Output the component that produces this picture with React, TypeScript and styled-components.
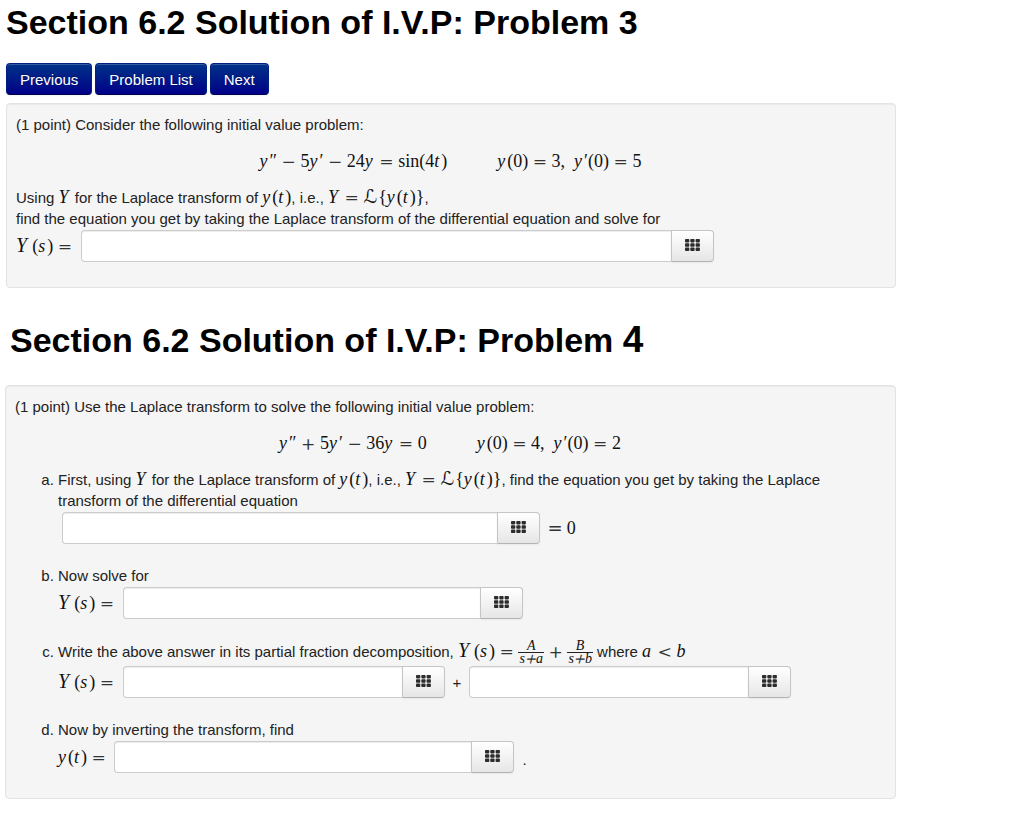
import React from "react";
import styled, { createGlobalStyle } from "styled-components";

const GlobalStyle = createGlobalStyle`
  *, *::before, *::after { box-sizing: border-box; }
  body {
    margin: 0;
    background: #fff;
    color: #222;
    font: 15px/21px "Liberation Sans", Arial, sans-serif;
  }
`;

const Page = styled.main`
  padding-bottom: 20px;
`;

const Problem = styled.section<{ $inset: number }>`
  padding: 0 128px 0 ${(p) => p.$inset}px;
`;

const Title = styled.h1<{ $spaced?: boolean }>`
  margin: 0;
  padding: ${(p) => (p.$spaced ? "32px 0 25px 5px" : "2px 0 21px")};
  color: #000;
  font-size: 34px;
  line-height: 40px;
  font-weight: bold;
  white-space: nowrap;
`;

const BigDigit = styled.span`
  font-size: 37px;
`;

const Nav = styled.nav`
  display: flex;
  gap: 3px;
  margin-bottom: 8px;
`;

const NavButton = styled.button`
  height: 32px;
  padding: 0 13px;
  border: 1px solid #002080;
  border-bottom-color: #00004d;
  border-radius: 4px;
  background: linear-gradient(#003388, #000088);
  box-shadow: inset 0 1px 0 rgba(255, 255, 255, 0.2), 0 1px 2px rgba(0, 0, 0, 0.05);
  color: #fff;
  font: inherit;
  text-shadow: 0 -1px 0 rgba(0, 0, 0, 0.25);
`;

const Well = styled.div`
  padding: 10px 10px 25px 9px;
  border: 1px solid #e3e3e3;
  border-radius: 4px;
  background: #f5f5f5;
  box-shadow: inset 0 1px 1px rgba(0, 0, 0, 0.05);
`;

const Text = styled.p<{ $tall?: boolean }>`
  margin: 0;
  line-height: ${(p) => (p.$tall ? 24 : 21)}px;
`;

const Equation = styled.div`
  display: flex;
  align-items: center;
  justify-content: center;
  gap: 50px;
  height: 20px;
  margin: 16px 0;
`;

const Math = styled.span`
  color: #111;
  font-family: "Liberation Serif", "Times New Roman", serif;
  font-size: 18px;
  line-height: 1;
  white-space: nowrap;
`;

const Var = styled.i<{ $capital?: boolean }>`
  padding-right: ${(p) => (p.$capital ? 5 : 2)}px;
  font-size: ${(p) => (p.$capital ? 20 : 18)}px;
  line-height: 0;
`;

const Symbol = styled.span`
  color: #333;
  font-family: "DejaVu Math TeX Gyre", "DejaVu Sans", sans-serif;
  line-height: 0;
`;

const Op = styled(Symbol)<{ $end?: boolean }>`
  padding: ${(p) => (p.$end ? "0 1px 0 5px" : "0 5px")};
  font-size: 17px;
`;

const Script = styled.span`
  padding-right: 1px;
  font-family: "DejaVu Sans", sans-serif;
  font-size: 19px;
  line-height: 0;
`;

const Fraction = styled.span`
  display: inline-flex;
  flex-direction: column;
  align-items: center;
  vertical-align: middle;
  font-size: 14px;
  line-height: 12px;
  font-style: italic;
`;

const Numerator = styled.span`
  width: 100%;
  border-bottom: 1px solid #222;
  text-align: center;
`;

const Denominator = styled.span`
  padding: 0 1px;
`;

const Steps = styled.ol`
  display: grid;
  gap: 21px;
  margin: 0;
  padding-left: 43px;
  list-style: lower-alpha;
`;

const AnswerRow = styled.div<{ $indent?: boolean }>`
  display: flex;
  align-items: center;
  gap: 8px;
  margin-top: 1px;
  padding-left: ${(p) => (p.$indent ? 4 : 0)}px;
`;

const Group = styled.div<{ $width: number }>`
  display: flex;
  flex: 0 1 ${(p) => p.$width}px;
  min-width: 0;
  height: 32px;
`;

const Answer = styled.input`
  flex: 1;
  min-width: 0;
  padding: 4px 6px;
  border: 1px solid #ccc;
  border-right: 0;
  border-radius: 4px 0 0 4px;
  background: #fff;
  box-shadow: inset 0 1px 1px rgba(0, 0, 0, 0.075);
  font: inherit;
`;

const PadButton = styled.button`
  display: grid;
  place-items: center;
  width: 43px;
  padding: 0 0 2px;
  border: 1px solid #c5c5c5;
  border-bottom-color: #b3b3b3;
  border-radius: 0 4px 4px 0;
  background: linear-gradient(#fff, #e6e6e6);
  box-shadow: inset 0 1px 0 rgba(255, 255, 255, 0.2), 0 1px 2px rgba(0, 0, 0, 0.05);
`;

const Note = styled.span`
  padding-top: 4px;
`;

const GridIcon = () => (
  <svg width="15" height="12" viewBox="0 0 15 12" fill="#2c2c2c" aria-hidden="true">
    {[0, 1, 2].map((r) =>
      [0, 1, 2].map((c) => (
        <rect key={`${r}${c}`} x={c * 5.3} y={r * 4.3} width="4.3" height="3.4" rx="0.8" />
      ))
    )}
  </svg>
);

const AnswerField = ({ id, width, label }: { id: string; width: number; label: string }) => (
  <Group $width={width}>
    <Answer id={id} type="text" aria-label={label} />
    <PadButton type="button" aria-label={`Equation editor for ${label}`}>
      <GridIcon />
    </PadButton>
  </Group>
);

const TransformOfY = () => (
  <Math>
    <Var>Y</Var>
    <Op>=</Op>
    <Script>ℒ</Script>
    {"{"}
    <Var>y</Var>(<Var>t</Var>){"}"}
  </Math>
);

const Call = ({ fn, arg }: { fn: string; arg: string }) => (
  <>
    <Var $capital={fn === "Y"}>{fn}</Var>(<Var>{arg}</Var>)
  </>
);

const CallLabel = ({ id, fn, arg }: { id: string; fn: string; arg: string }) => (
  <Math as="label" htmlFor={id}>
    <Call fn={fn} arg={arg} />
    <Op $end>=</Op>
  </Math>
);

const InitialValues = ({ first, second }: { first: number; second: number }) => (
  <Math>
    <Var>y</Var>(0)<Op>=</Op>
    {first},&nbsp; <Var>y</Var>′(0)<Op>=</Op>
    {second}
  </Math>
);

export default function App() {
  return (
    <Page>
      <GlobalStyle />
      <Problem $inset={6}>
        <Title>Section 6.2 Solution of I.V.P: Problem 3</Title>
        <Nav>
          <NavButton type="button">Previous</NavButton>
          <NavButton type="button">Problem List</NavButton>
          <NavButton type="button">Next</NavButton>
        </Nav>
        <Well>
          <Text>(1 point) Consider the following initial value problem:</Text>
          <Equation>
            <Math>
              <Var>y</Var>″<Op>−</Op>5<Var>y</Var>′<Op>−</Op>24<Var>y</Var>
              <Op>=</Op>sin(4<Var>t</Var>)
            </Math>
            <InitialValues first={3} second={5} />
          </Equation>
          <Text>
            Using <Math><Var>Y</Var></Math> for the Laplace transform of{" "}
            <Math><Call fn="y" arg="t" /></Math>, i.e., <TransformOfY />,
          </Text>
          <Text>
            find the equation you get by taking the Laplace transform of the differential equation and solve for
          </Text>
          <AnswerRow>
            <CallLabel id="p3" fn="Y" arg="s" />
            <AnswerField id="p3" width={633} label="Y(s)" />
          </AnswerRow>
        </Well>
      </Problem>

      <Problem $inset={5}>
        <Title $spaced>
          Section 6.2 Solution of I.V.P: Problem <BigDigit>4</BigDigit>
        </Title>
        <Well>
          <Text>(1 point) Use the Laplace transform to solve the following initial value problem:</Text>
          <Equation>
            <Math>
              <Var>y</Var>″<Op>+</Op>5<Var>y</Var>′<Op>−</Op>36<Var>y</Var>
              <Op>=</Op>0
            </Math>
            <InitialValues first={4} second={2} />
          </Equation>
          <Steps>
            <li>
              <Text>
                First, using <Math><Var>Y</Var></Math> for the Laplace transform of{" "}
                <Math><Call fn="y" arg="t" /></Math>, i.e., <TransformOfY />, find the equation you get by
                taking the Laplace <span>transform of the differential equation</span>
              </Text>
              <AnswerRow $indent>
                <AnswerField id="p4a" width={478} label="Transformed equation" />
                <Math>
                  <Symbol>=</Symbol> 0
                </Math>
              </AnswerRow>
            </li>
            <li>
              <Text>Now solve for</Text>
              <AnswerRow>
                <CallLabel id="p4b" fn="Y" arg="s" />
                <AnswerField id="p4b" width={400} label="Y(s)" />
              </AnswerRow>
            </li>
            <li>
              <Text $tall>
                Write the above answer in its partial fraction decomposition,{" "}
                <Math>
                  <Call fn="Y" arg="s" />
                  <Op>=</Op>
                  <Fraction>
                    <Numerator>A</Numerator>
                    <Denominator>s<Symbol>+</Symbol>a</Denominator>
                  </Fraction>
                  <Op>+</Op>
                  <Fraction>
                    <Numerator>B</Numerator>
                    <Denominator>s<Symbol>+</Symbol>b</Denominator>
                  </Fraction>
                </Math>{" "}
                where{" "}
                <Math>
                  <Var>a</Var>
                  <Op>&lt;</Op>
                  <Var>b</Var>
                </Math>
              </Text>
              <AnswerRow>
                <CallLabel id="p4c1" fn="Y" arg="s" />
                <AnswerField id="p4c1" width={322} label="First fraction" />
                <span>+</span>
                <AnswerField id="p4c2" width={322} label="Second fraction" />
              </AnswerRow>
            </li>
            <li>
              <Text>Now by inverting the transform, find</Text>
              <AnswerRow>
                <CallLabel id="p4d" fn="y" arg="t" />
                <AnswerField id="p4d" width={400} label="y(t)" />
                <Note>.</Note>
              </AnswerRow>
            </li>
          </Steps>
        </Well>
      </Problem>
    </Page>
  );
}
